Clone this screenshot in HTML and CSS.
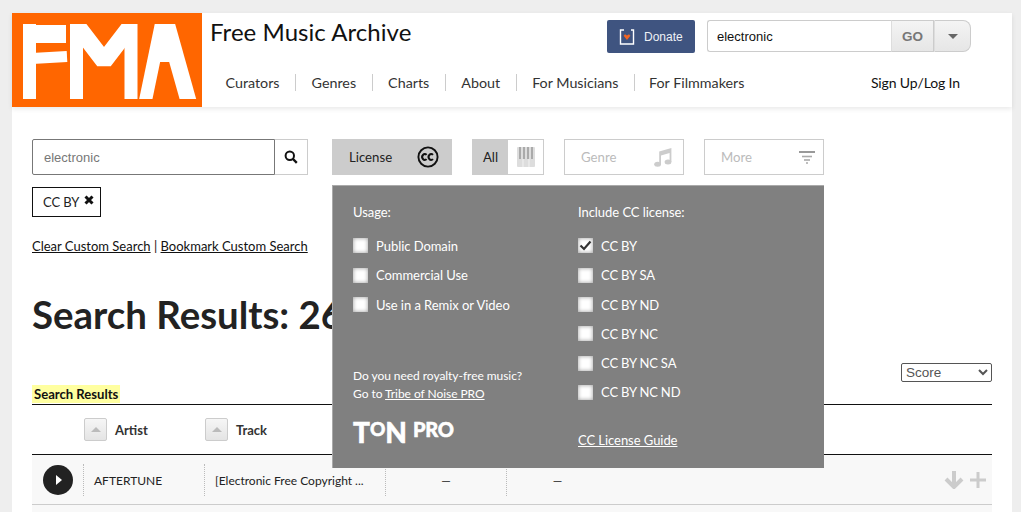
FILE: index.html
```html
<!DOCTYPE html>
<html lang="en">
<head>
<meta charset="utf-8">
<title>Free Music Archive</title>
<link rel="stylesheet" href="styles.css">
</head>
<body>
<div class="page">
  <header class="site-header">
    <a class="logo" aria-label="FMA" href="#">
      <svg width="190" height="94" viewBox="0 0 190 94" fill="none" stroke="#fff">
        <clipPath id="logo-clip"><rect x="0" y="11" width="190" height="75"/></clipPath>
        <g clip-path="url(#logo-clip)">
          <path stroke-width="13" d="M17.5 90V8"/>
          <path stroke-width="18" d="M11 21H54"/>
          <path stroke-width="11" d="M20 45.5L55 43.5"/>
          <path stroke-width="13" d="M64.5 90V8M119 90V8"/>
          <path stroke-width="17" d="M66 14L92 48L118 14" stroke-linejoin="bevel"/>
          <path stroke-width="13" d="M133 90L150 8"/>
          <path stroke-width="16" d="M177 90L154 8"/>
          <path stroke-width="38" d="M146 30H160"/>
        </g>
      </svg>
    </a>
    <div class="header-main">
      <div class="header-top">
        <div class="site-title">Free Music Archive</div>
        <a class="donate" href="#">
          <svg width="16" height="16" viewBox="0 0 16 16" fill="none">
            <path d="M5 1H1.5V15H14.5V1H12" stroke="#fff" stroke-width="1.4"/>
            <path d="M8 11L4.6 6.8 6 5.2 8 6.4 10 5.2 11.4 6.8Z" fill="#f26522"/>
          </svg>
          <span>Donate</span>
        </a>
        <div class="top-search">
          <input class="top-input" type="text" value="electronic" aria-label="Search">
          <button class="go" type="button">GO</button>
          <button class="drop" type="button" aria-label="Options"><span class="tri"></span></button>
        </div>
      </div>
      <nav class="nav">
        <ul class="nav-list">
          <li>Curators</li><li>Genres</li><li>Charts</li><li>About</li><li>For Musicians</li><li>For Filmmakers</li>
        </ul>
        <a class="login" href="#">Sign Up/Log In</a>
      </nav>
    </div>
  </header>

  <main class="content">
    <div class="filters">
      <div class="search-group">
        <input class="search-input" type="text" value="electronic" aria-label="Search">
        <button class="search-btn" type="button" aria-label="Search">
          <svg width="14" height="14" viewBox="0 0 14 14" fill="none" stroke="#111">
            <circle cx="5.8" cy="5.8" r="4.2" stroke-width="2"/>
            <path d="M9 9L12.8 12.8" stroke-width="2.4"/>
          </svg>
        </button>
      </div>
      <div class="filter active license">
        <span>License</span>
        <svg width="22" height="22" viewBox="0 0 22 22" fill="none" stroke="#111">
          <circle cx="11" cy="11" r="9.6" stroke-width="1.9"/>
          <path d="M9.6 8.9A2.6 2.9 0 1 0 9.6 13.1" stroke-width="2"/>
          <path d="M16 8.9A2.6 2.9 0 1 0 16 13.1" stroke-width="2"/>
        </svg>
      </div>
      <div class="all">
        <span class="all-label">All</span>
        <span class="all-icon">
          <svg width="18" height="20" viewBox="0 0 18 20">
            <rect width="18" height="20" rx="1" fill="#ddd"/>
            <path d="M3 0V12M7 0V12M11 0V12M15 0V12" stroke="#aaa" stroke-width="2"/>
            <path d="M6 12V20M12 12V20" stroke="#f2f2f2" stroke-width="1"/>
          </svg>
        </span>
      </div>
      <div class="filter muted genre">
        <span>Genre</span>
        <svg width="18" height="20" viewBox="0 0 18 20" fill="#ccc">
          <ellipse cx="3.6" cy="17.2" rx="3.4" ry="2.5"/>
          <ellipse cx="14" cy="15" rx="3.4" ry="2.5"/>
          <path d="M5.2 17V4.5L17.4 1V15H15.6V6L7 8.4V17Z"/>
        </svg>
      </div>
      <div class="filter muted more">
        <span>More</span>
        <svg width="16" height="13" viewBox="0 0 16 13" fill="none" stroke="#999">
          <path stroke-width="2" d="M0 1H16"/>
          <path stroke-width="1.6" d="M3 5.5H13" stroke="#aaa"/>
          <path stroke-width="1.6" d="M5 9H11" stroke="#aaa"/>
          <path stroke-width="1.6" d="M7 12H9" stroke="#aaa"/>
        </svg>
      </div>
    </div>

    <div class="tag">CC BY
      <svg width="10" height="10" viewBox="0 0 10 10" stroke="#111" stroke-width="3"><path d="M1.5 1.5L8.5 8.5M8.5 1.5L1.5 8.5"/></svg>
    </div>

    <p class="custom-links"><a href="#">Clear Custom Search</a> | <a href="#">Bookmark Custom Search</a></p>

    <h1 class="results-title">Search Results: 26</h1>

    <div class="results-bar">
      <span class="results-label">Search Results</span>
      <select class="sort" aria-label="Sort"><option>Score</option></select>
    </div>

    <div class="table-head">
      <div class="th th-artist"><button class="sort-btn" type="button" aria-label="Sort by artist"><span class="tri-up"></span></button>Artist</div>
      <div class="th"><button class="sort-btn" type="button" aria-label="Sort by track"><span class="tri-up"></span></button>Track</div>
    </div>

    <div class="row">
      <div class="cell cell-play"><span class="play"><span class="play-tri"></span></span></div>
      <div class="cell cell-artist">AFTERTUNE</div>
      <div class="cell cell-track">[Electronic Free Copyright ...</div>
      <div class="cell cell-dash">—</div>
      <div class="cell cell-dash cell-dash-narrow">—</div>
      <div class="cell cell-actions">
        <svg width="20" height="18" viewBox="0 0 20 18" fill="none" stroke="#ccc" stroke-width="4"><path d="M10 0V15M2 8L10 16L18 8"/></svg>
        <svg width="18" height="18" viewBox="0 0 18 18" fill="none" stroke="#ccc" stroke-width="3"><path d="M9 1V17M1 9H17"/></svg>
      </div>
    </div>
    <div class="row row-next"></div>

    <section class="license-panel">
      <div class="panel-col panel-left">
        <h2 class="panel-title">Usage:</h2>
        <label class="check"><span class="box"></span>Public Domain</label>
        <label class="check"><span class="box"></span>Commercial Use</label>
        <label class="check"><span class="box"></span>Use in a Remix or Video</label>
        <p class="promo">Do you need royalty-free music?<br>Go to <a href="#">Tribe of Noise PRO</a></p>
        <div class="ton"><span class="ton-big">T</span><span class="ton-o">O</span><span class="ton-big">N</span><span class="ton-pro">PRO</span></div>
      </div>
      <div class="panel-col panel-right">
        <h2 class="panel-title">Include CC license:</h2>
        <label class="check check-tight"><span class="box">
          <svg width="15" height="15" viewBox="0 0 15 15" fill="none" stroke="#333" stroke-width="2.2"><path d="M2.5 7.5L6 11L12.5 3.5"/></svg>
        </span>CC BY</label>
        <label class="check check-tight"><span class="box"></span>CC BY SA</label>
        <label class="check check-tight"><span class="box"></span>CC BY ND</label>
        <label class="check check-tight"><span class="box"></span>CC BY NC</label>
        <label class="check check-tight"><span class="box"></span>CC BY NC SA</label>
        <label class="check check-tight"><span class="box"></span>CC BY NC ND</label>
        <a class="guide" href="#">CC License Guide</a>
      </div>
    </section>
  </main>
</div>
</body>
</html>
```

FILE: styles.css
```css
* { box-sizing: border-box; }
html, body { height: 512px; overflow: hidden; }
body {
  margin: 0;
  padding-top: 13px;
  background: #eee;
  color: #222;
  font-family: Lato, "Liberation Sans", sans-serif;
}
a { color: inherit; }
.page { width: 1000px; margin-left: 12px; height: 499px; background: #fff; }

.site-header {
  display: flex;
  height: 94px;
  background: #fff;
  box-shadow: 0 2px 5px rgba(0, 0, 0, .09);
  position: relative;
}
.logo { display: block; width: 190px; height: 94px; background: #ff6600; flex: none; }
.logo svg { display: block; }
.header-main { flex: 1; padding-left: 8px; display: flex; flex-direction: column; }
.header-top { display: flex; align-items: flex-start; height: 51px; padding-right: 41px; }
.site-title { font-size: 24px; line-height: 30px; color: #111; margin-top: 4px; margin-right: auto; letter-spacing: .05px; }
.donate {
  display: flex; align-items: center; gap: 9px;
  width: 88px; height: 33px; margin-top: 7px; padding-left: 12px;
  background: #3f5480; border-radius: 2px;
  color: #eef1f6; font: 500 12px "Liberation Sans", sans-serif; text-decoration: none;
}
.top-search { display: flex; height: 33px; width: 264px; margin: 7px 0 0 12px; }
.top-input {
  width: 184px; height: 32px; padding: 1px 9px 0; border: 1px solid #ccc; border-right: 0;
  border-radius: 3px 0 0 3px; outline: 0;
  font: 13px "Liberation Sans", sans-serif; color: #111;
}
.go, .drop {
  height: 32px; border: 1px solid #ccc; border-left: 1px solid #ddd; background: linear-gradient(#f4f4f4, #e6e6e6);
  padding: 0; color: #777; font: bold 13.5px "Liberation Sans", sans-serif;
}
.go { width: 43px; }
.drop { width: 37px; border-radius: 0 8px 8px 0; display: flex; align-items: center; justify-content: center; }
.tri { width: 0; height: 0; border: 5px solid transparent; border-top: 5px solid #666; border-bottom: 0; }

.nav { display: flex; justify-content: space-between; align-items: center; height: 19px; margin-top: 9px; padding-right: 52px; }
.nav-list { display: flex; list-style: none; margin: 0; padding: 0; font-size: 14.3px; color: #333; }
.nav-list li { padding: 0 15.5px; line-height: 17px; border-left: 1px solid #ccc; }
.nav-list li:first-child { border-left: 0; }
.nav-list li:last-child { padding-left: 14px; }
.login { font-size: 14px; color: #111; text-decoration: none; letter-spacing: -.12px; }

.content { position: relative; padding: 32px 20px 0; }
.filters { display: flex; height: 36px; gap: 20px; font-size: 13.2px; }
.search-group { display: flex; margin-right: 4px; }
.search-input {
  width: 243px; height: 36px; padding: 1px 11px 0; border: 1px solid #777; border-radius: 2px 0 0 2px; outline: 0;
  font: 13px "Liberation Sans", sans-serif; color: #777;
}
.search-btn { width: 33px; height: 36px; border: 1px solid #ccc; border-left: 0; background: #fff; padding: 0; display: flex; align-items: center; justify-content: center; }
.filter { width: 120px; display: flex; align-items: center; justify-content: space-between; padding: 0 12px 0 16px; border: 1px solid #ccc; }
.filter.active { background: #ccc; color: #222; }
.filter.muted { color: #bbb; }
.filter.genre { padding-right: 11px; }
.filter.more { padding-right: 8px; }
.all { width: 72px; display: flex; border: 1px solid #ccc; }
.all-label { width: 35px; background: #ccc; display: flex; align-items: center; justify-content: center; font-size: 13.2px; color: #222; }
.all-icon { flex: 1; display: flex; align-items: center; justify-content: center; }

.tag {
  display: flex; align-items: center; gap: 5px;
  width: 69px; height: 30px; margin-top: 12px; padding-left: 10px; border: 1px solid #111;
  font-size: 13px; color: #222; letter-spacing: -.1px;
}
.tag svg { margin-top: -4px; }
.custom-links { margin: 20px 0 0; font-size: 13px; line-height: 18px; color: #111; }
.results-title { margin: 34px 0 0; font-size: 38.4px; line-height: 50px; font-weight: 700; color: #222; }
.results-bar { height: 66px; border-bottom: 1px solid #111; display: flex; justify-content: space-between; align-items: flex-end; }
.results-label { background: #ffffa0; padding: 0 2px; margin-bottom: 1px; font-size: 13.1px; line-height: 18px; font-weight: 700; color: #111; }
.sort {
  width: 91px; height: 19px; margin-bottom: 22px; padding: 0;
  background: #fff; border: 1px solid #555; border-radius: 2px; color: #555; font: 13.5px "Liberation Sans", sans-serif;
}
.table-head { display: flex; height: 50px; padding-left: 52px; border-bottom: 1px solid #111; align-items: center; }
.th { display: flex; align-items: center; gap: 8px; width: 121px; font-size: 13px; font-weight: 700; color: #333; }
.sort-btn { width: 23px; height: 23px; padding: 0; border: 1px solid #ccc; border-radius: 2px; background: linear-gradient(#f6f6f6, #e4e4e4); display: flex; align-items: center; justify-content: center; }
.tri-up { width: 0; height: 0; border: 5px solid transparent; border-top: 0; border-bottom: 5px solid #bbb; }
.row { display: flex; height: 50px; padding-top: 1px; background: #f8f8f8; border-bottom: 1px solid #ccc; align-items: center; font-size: 12px; color: #222; }
.row-next { height: 8px; border: 0; }
.cell { height: 32px; display: flex; align-items: center; border-left: 1px dotted #bbb; }
.cell-play { width: 51px; padding-left: 11px; border-left: 0; }
.play { width: 30px; height: 30px; border-radius: 50%; background: #222; display: flex; align-items: center; justify-content: center; }
.play-tri { width: 0; height: 0; margin-left: 2px; border: 5px solid transparent; border-left: 6px solid #fff; border-right: 0; }
.cell-artist { width: 121px; padding-left: 10px; }
.cell-track { width: 181px; padding-left: 10px; }
.cell-dash { width: 121px; justify-content: center; }
.cell-dash-narrow { width: 102px; }
.cell-actions { margin-left: auto; border: 0; gap: 5px; padding-right: 5px; }

.license-panel {
  position: absolute; left: 320px; top: 78px; width: 492px; height: 283px;
  display: flex; background: #808080; color: #fff; border: 1px solid #aaa; border-width: 1px 0 0 1px;
  padding: 17px 0 0 20px; font-size: 13px; letter-spacing: -.05px;
}
.panel-col { display: flex; flex-direction: column; }
.panel-left { width: 225px; }
.panel-title { margin: 0 0 10.3px; font-size: 13px; line-height: 18px; font-weight: 400; }
.check { display: flex; align-items: center; gap: 8px; height: 29.3px; line-height: 18px; }
.check-tight { word-spacing: -.4px; }
.box { width: 15px; height: 15px; background: #fff; box-shadow: inset 0 0 4px #999; flex: none; display: block; }
.box svg { display: block; }
.promo { margin: 48px 0 0; font-size: 12px; line-height: 18px; }
.ton { display: flex; align-items: flex-start; margin-top: 17px; height: 24px; color: #fff; font-weight: 900; letter-spacing: 0; -webkit-text-stroke: .5px #fff; }
.ton-big { font-size: 28px; line-height: 24px; }
.ton-o { font-size: 19px; line-height: 18px; }
.ton-pro { font-size: 20px; line-height: 18px; margin-left: 6px; letter-spacing: -.3px; }
.guide { margin-top: 24px; font-size: 13px; line-height: 18px; }
```
